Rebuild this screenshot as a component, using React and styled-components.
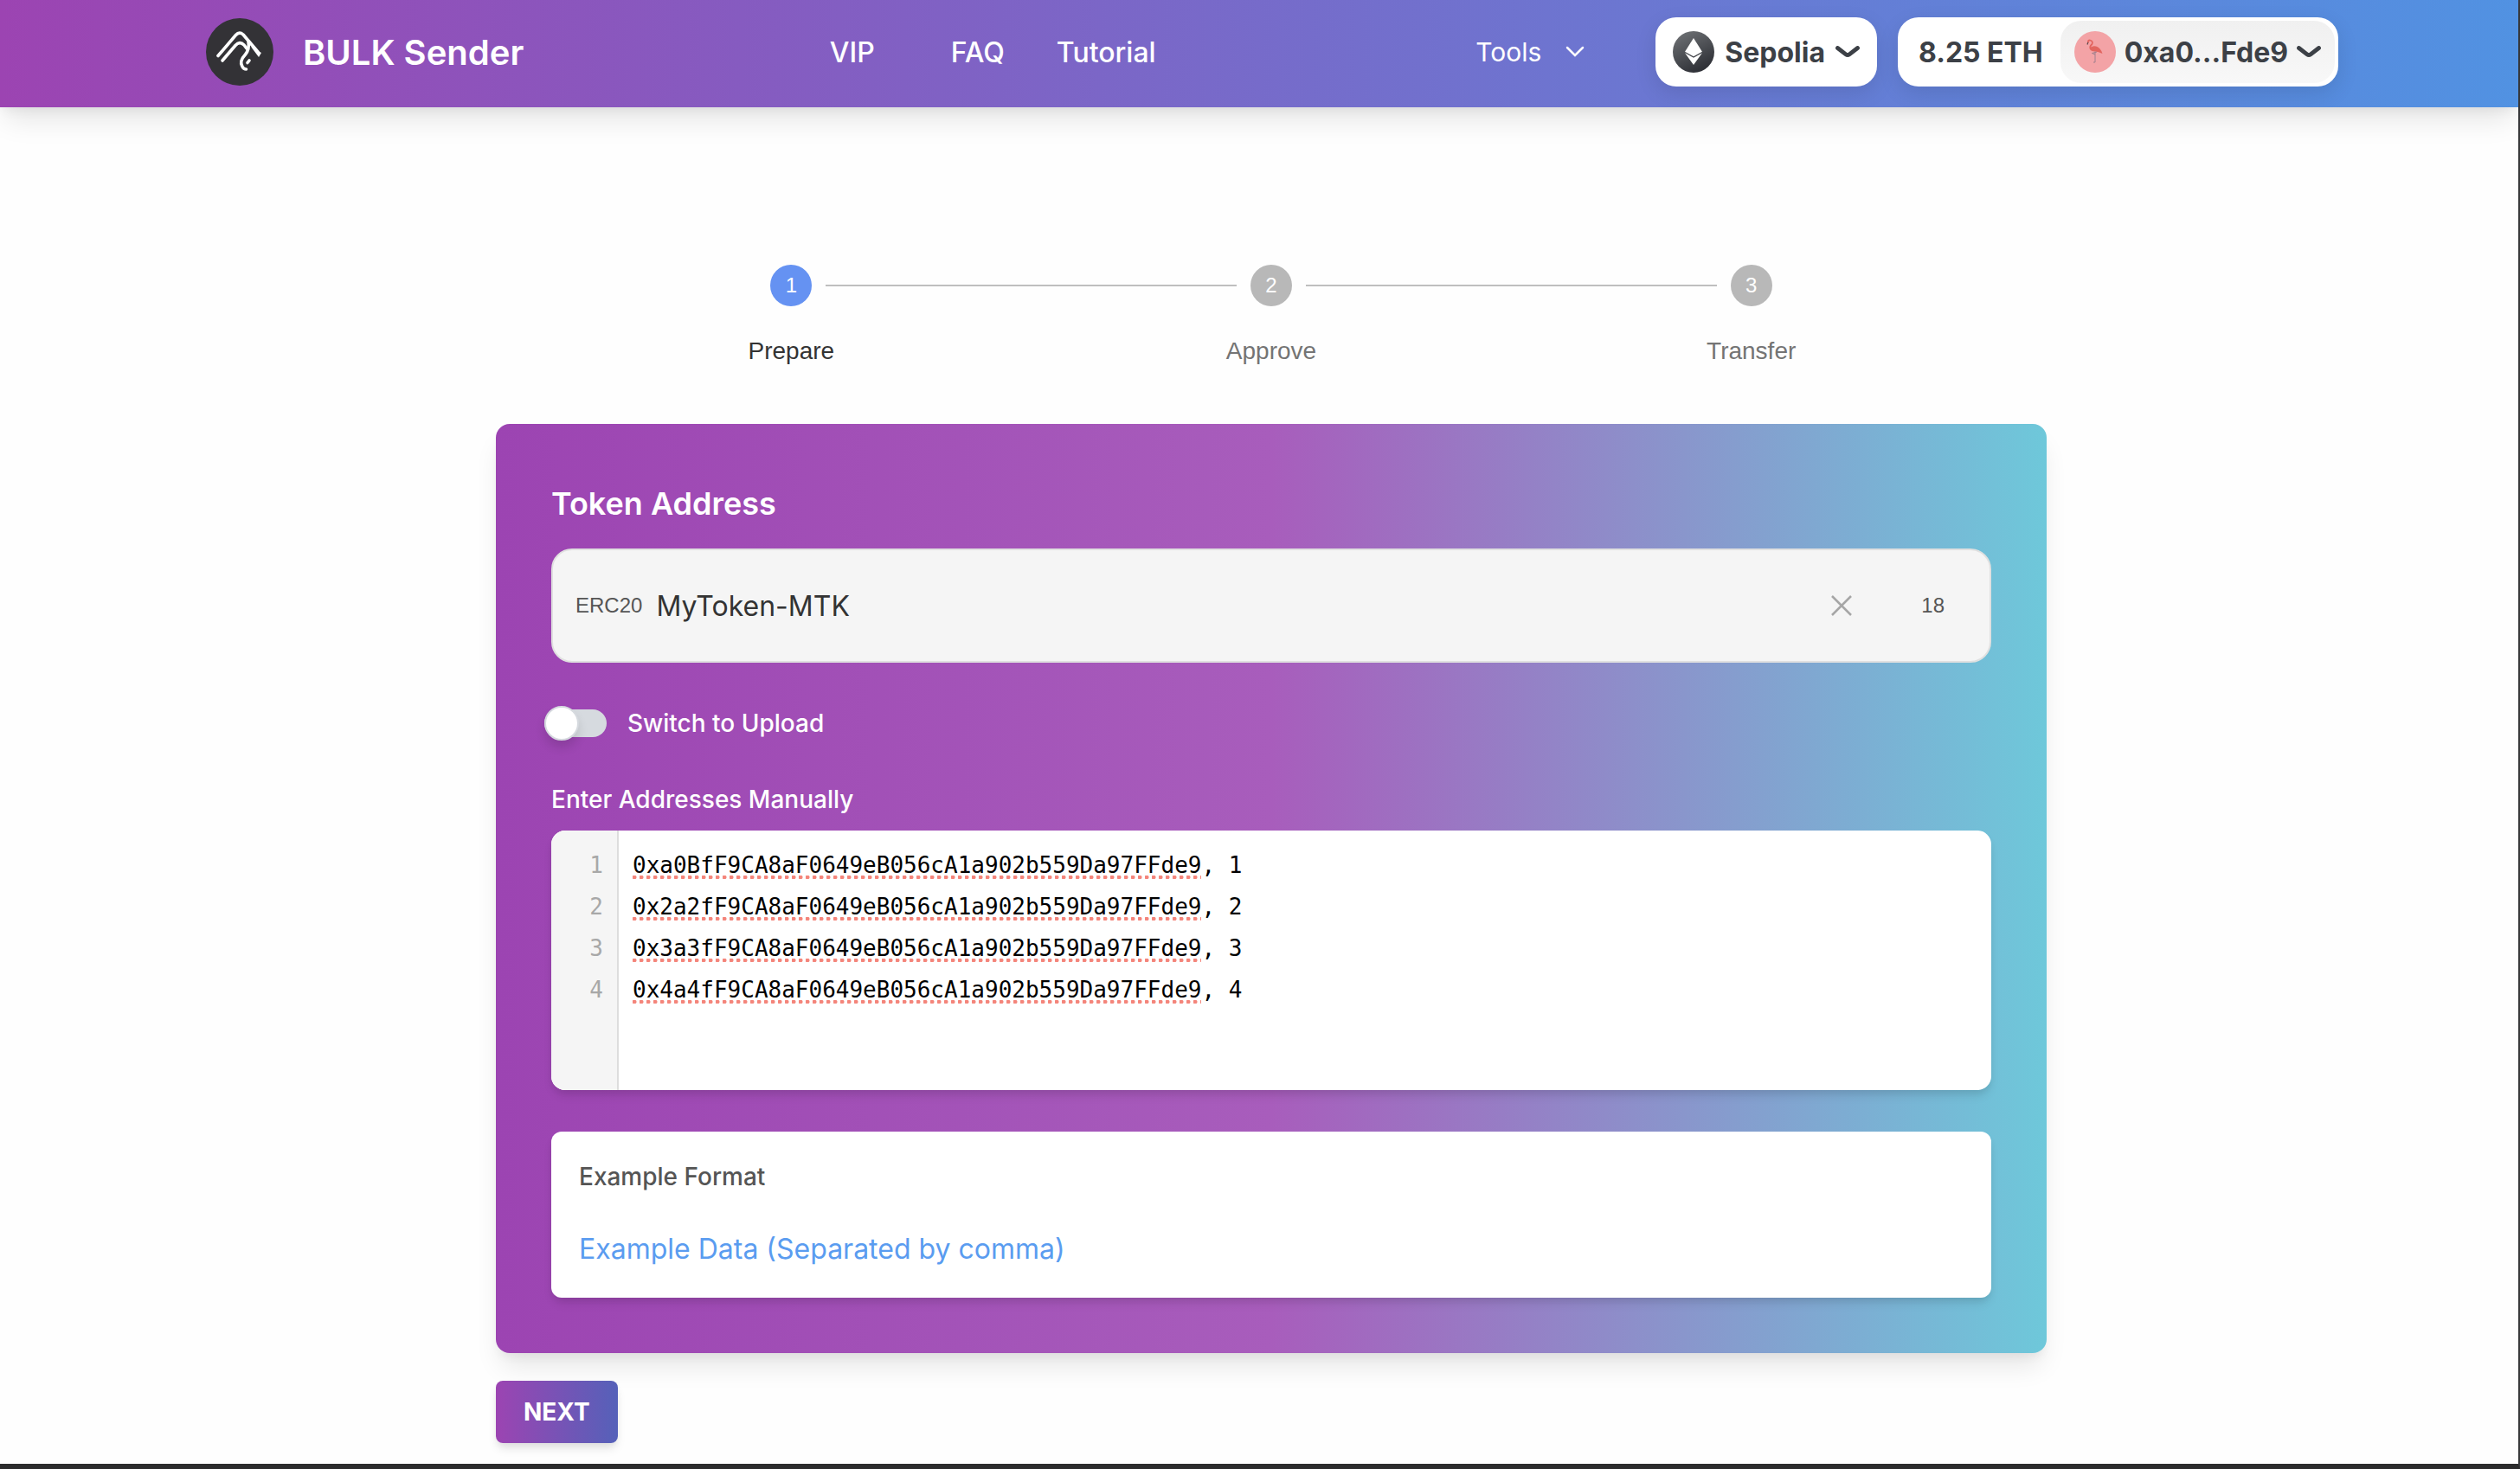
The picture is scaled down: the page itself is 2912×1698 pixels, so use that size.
import React, { useState } from 'react';
import styled, { createGlobalStyle } from 'styled-components';

const STEPS = ['Prepare', 'Approve', 'Transfer'];

const RECIPIENTS = `0xa0BfF9CA8aF0649eB056cA1a902b559Da97FFde9, 1
0x2a2fF9CA8aF0649eB056cA1a902b559Da97FFde9, 2
0x3a3fF9CA8aF0649eB056cA1a902b559Da97FFde9, 3
0x4a4fF9CA8aF0649eB056cA1a902b559Da97FFde9, 4`;

function Logo() {
  return (
    <svg width="78" height="78" viewBox="0 0 78 78" fill="none" aria-hidden="true">
      <circle cx="39" cy="39" r="39" fill="#333236" />
      <g stroke="#fff" strokeWidth="3.6" strokeLinecap="round" strokeLinejoin="round">
        <path d="M14 43.5L34.5 19.5Q38.5 15 43 19L60 39" />
        <path d="M19 49L34 31.5Q39 26 44 31L47 35" />
        <path d="M49 27Q50.5 36 45.5 42Q38 50 42 56Q43.5 59 46.5 59" />
        <path d="M48 51.5L50 49" />
      </g>
      <path d="M52 33L64 40L61 45Z" fill="#fff" />
    </svg>
  );
}

function ThinChevron() {
  return (
    <svg width="22" height="14" viewBox="0 0 22 14" fill="none" aria-hidden="true">
      <path d="M2 2L11 11L20 2" stroke="#fff" strokeWidth="2.5" strokeLinecap="round" />
    </svg>
  );
}

function BoldChevron() {
  return (
    <svg width="28" height="14" viewBox="0 0 28 14" fill="none" aria-hidden="true">
      <path
        d="M2.5 2.5L12 9.8Q14 11.4 16 9.8L25.5 2.5"
        stroke="#3c4046"
        strokeWidth="4.8"
        strokeLinecap="round"
      />
    </svg>
  );
}

function EthIcon() {
  return (
    <svg width="48" height="48" viewBox="0 0 28 28" fill="none" aria-hidden="true">
      <defs>
        <linearGradient id="ethShade" x1="0" y1="0" x2="14" y2="28" gradientUnits="userSpaceOnUse">
          <stop stopColor="#737679" />
          <stop offset="1" stopColor="#303238" />
        </linearGradient>
      </defs>
      <circle cx="14" cy="14" r="14" fill="url(#ethShade)" />
      <path d="M8.2 13.9L14 17L19.8 13.9L14 4.7Z" fill="#fff" />
      <path d="M8.2 14.8L14 18L19.8 14.8L14 22.8Z" fill="#fff" />
    </svg>
  );
}

function FlamingoAvatar() {
  return (
    <svg width="48" height="48" viewBox="0 0 48 48" fill="none" aria-hidden="true">
      <circle cx="24" cy="24" r="24" fill="#f3a3a6" />
      <path
        d="M16 13Q15.5 10.5 18 10.5Q22 11.5 20.500 15Q17 18 19 20.5"
        stroke="#e2655f"
        strokeWidth="1.8"
        strokeLinecap="round"
      />
      <path d="M15.8 13L15 15.5" stroke="#5b4a4e" strokeWidth="1.2" />
      <path d="M17.5 20Q20 16.500 25 17.5Q30 18.5 32.5 26Q28 23.5 24 23.5Q19 23.5 17.5 20Z" fill="#e2655f" />
      <path d="M24 23.5V36M26 24L20.5 25.5L24 27M24 36H22" stroke="#a07f8c" strokeWidth="1" />
    </svg>
  );
}

export default function App() {
  const [recipients, setRecipients] = useState(RECIPIENTS);
  const lines = recipients.split('\n');

  return (
    <Page>
      <GlobalStyle />
      <Header>
        <Brand href="#">
          <Logo />
          <BrandName>BULK Sender</BrandName>
        </Brand>
        <Nav>
          <NavLink href="#vip">VIP</NavLink>
          <NavLink href="#faq">FAQ</NavLink>
          <NavLink href="#tutorial">Tutorial</NavLink>
        </Nav>
        <ToolsButton type="button">
          Tools
          <ThinChevron />
        </ToolsButton>
        <Wallet>
          <ChainButton type="button">
            <EthIcon />
            Sepolia
            <BoldChevron />
          </ChainButton>
          <AccountButton type="button">
            8.25 ETH
            <Account>
              <FlamingoAvatar />
              0xa0...Fde9
              <BoldChevron />
            </Account>
          </AccountButton>
        </Wallet>
      </Header>

      <Main>
        <Content>
          <Stepper>
            {STEPS.map((label, index) => (
              <Step key={label} $active={index === 0}>
                <StepTrack>
                  <Connector $hidden={index === 0} />
                  <StepNumber $active={index === 0}>{index + 1}</StepNumber>
                  <Connector $hidden={index === STEPS.length - 1} />
                </StepTrack>
                {label}
              </Step>
            ))}
          </Stepper>

          <Card>
            <CardTitle htmlFor="token">Token Address</CardTitle>
            <TokenField>
              <TokenNote>ERC20</TokenNote>
              <TokenInput id="token" defaultValue="MyToken-MTK" />
              <ClearButton type="button" aria-label="Clear token">
                <svg width="24" height="24" viewBox="0 0 24 24" aria-hidden="true">
                  <path d="M1 1L23 23M23 1L1 23" stroke="#a6a6a6" strokeWidth="2.5" />
                </svg>
              </ClearButton>
              <TokenNote>18</TokenNote>
            </TokenField>

            <SwitchRow>
              <Switch type="checkbox" role="switch" />
              Switch to Upload
            </SwitchRow>

            <FieldLabel htmlFor="recipients">Enter Addresses Manually</FieldLabel>
            <Editor>
              <Gutter>
                {lines.map((line, index) => (
                  <span key={index}>{index + 1}</span>
                ))}
              </Gutter>
              <Misspellings aria-hidden="true">
                {lines.map((line, index) => (
                  <Underline key={index} style={{ width: `${line.split(',')[0].length}ch` }} />
                ))}
              </Misspellings>
              <EditorInput
                id="recipients"
                spellCheck={false}
                value={recipients}
                onChange={(e) => setRecipients(e.target.value)}
              />
            </Editor>

            <ExampleBox>
              <ExampleTitle>Example Format</ExampleTitle>
              <ExampleLink href="#example">Example Data (Separated by comma)</ExampleLink>
            </ExampleBox>
          </Card>
          <NextButton type="button">NEXT</NextButton>
        </Content>
      </Main>
    </Page>
  );
}

const GlobalStyle = createGlobalStyle`
  *,
  *::before {
    box-sizing: border-box;
  }

  body {
    margin: 0;
    background: #fefefe;
    font-family: Inter, sans-serif;
  }

  button,
  input,
  textarea {
    font-family: inherit;
  }
`;

const shadowLarge = '0 20px 30px -6px rgba(0, 0, 0, 0.1), 0 8px 12px -4px rgba(0, 0, 0, 0.05)';
const shadowMedium = '0 8px 12px -2px rgba(0, 0, 0, 0.1), 0 4px 8px -2px rgba(0, 0, 0, 0.06)';

const Page = styled.div`
  display: flex;
  flex-direction: column;
  min-height: 100vh;
  border-right: 2px solid #38393b;
  border-bottom: 6px solid #2b2b2c;
`;

const Header = styled.header`
  display: flex;
  align-items: center;
  padding: 20px 208px 24px 238px;
  background: linear-gradient(90deg, #9c44b2, #5192e2);
  box-shadow: ${shadowLarge};
`;

const Brand = styled.a`
  display: flex;
  align-items: center;
  gap: 34px;
  color: #fff;
  text-decoration: none;
`;

const BrandName = styled.span`
  font-size: 40px;
  font-weight: 600;
`;

const Nav = styled.nav`
  display: flex;
  gap: 60px;
  margin: 0 auto;
  padding-right: 16px;
`;

const NavLink = styled.a`
  font-size: 32px;
  font-weight: 500;
  color: #fff;
  text-decoration: none;

  &:first-child {
    margin-right: 28px;
  }
`;

const ToolsButton = styled.button`
  display: flex;
  align-items: center;
  gap: 28px;
  margin-right: 82px;
  padding: 0;
  border: 0;
  background: none;
  font-size: 30px;
  color: #fff;
`;

const Wallet = styled.div`
  display: flex;
  gap: 24px;
`;

const WalletButton = styled.button`
  display: flex;
  align-items: center;
  height: 80px;
  border: 0;
  border-radius: 24px;
  background: #fff;
  box-shadow: 0 8px 24px rgba(0, 0, 0, 0.1);
  font-size: 32px;
  font-weight: 700;
  color: #3c4046;
`;

const ChainButton = styled(WalletButton)`
  gap: 12px;
  padding: 0 20px;
`;

const AccountButton = styled(WalletButton)`
  gap: 20px;
  padding: 0 4px 0 24px;
`;

const Account = styled.span`
  display: flex;
  align-items: center;
  gap: 10px;
  height: 72px;
  padding: 0 16px;
  border-radius: 24px;
  background: linear-gradient(#f0f0f0, #f8f8f8);
`;

const Main = styled.main`
  padding: 182px 0 24px 28px;
`;

const Content = styled.div`
  max-width: 1792px;
  margin: 0 auto;
`;

const Stepper = styled.ol`
  display: flex;
  margin: 0 0 64px;
  padding: 0 64px;
  list-style: none;
`;

const Step = styled.li`
  flex: 1;
  display: flex;
  flex-direction: column;
  gap: 32px;
  font-family: 'Liberation Sans', sans-serif;
  font-size: 28px;
  line-height: 40px;
  text-align: center;
  color: ${({ $active }) => ($active ? '#333' : '#747474')};
`;

const StepTrack = styled.div`
  display: flex;
  align-items: center;
  gap: 16px;
`;

const Connector = styled.span`
  flex: 1;
  height: 2px;
  background: ${({ $hidden }) => ($hidden ? 'transparent' : '#bfbfbf')};
`;

const StepNumber = styled.span`
  width: 48px;
  height: 48px;
  border-radius: 50%;
  background: ${({ $active }) => ($active ? '#6592f2' : '#b8b8b8')};
  font-size: 24px;
  line-height: 48px;
  color: #fff;
`;

const Card = styled.section`
  display: flex;
  flex-direction: column;
  padding: 64px;
  border-radius: 16px;
  background: linear-gradient(90deg, #9c44b2 0%, #a85dbc 50%, #6ec8da 100%);
  box-shadow: ${shadowLarge};
`;

const CardTitle = styled.label`
  margin-bottom: 24px;
  font-size: 36px;
  font-weight: 600;
  line-height: 56px;
  color: #fff;
`;

const TokenField = styled.div`
  display: flex;
  align-items: center;
  height: 132px;
  padding: 0 52px 0 26px;
  border: 2px solid #e0e0e0;
  border-radius: 24px;
  background: #f5f5f5;
`;

const TokenNote = styled.span`
  font-family: 'Liberation Sans', sans-serif;
  font-size: 24px;
  color: #555;
`;

const TokenInput = styled.input`
  flex: 1;
  padding: 0 16px;
  border: 0;
  outline: 0;
  background: none;
  font-size: 32px;
  color: #333;
`;

const ClearButton = styled.button`
  display: flex;
  margin-right: 80px;
  padding: 0;
  border: 0;
  background: none;
`;

const SwitchRow = styled.label`
  display: flex;
  align-items: center;
  gap: 24px;
  margin: 50px 0 48px;
  font-size: 28px;
  font-weight: 500;
  line-height: 40px;
  color: #fff;
`;

const Switch = styled.input`
  appearance: none;
  display: flex;
  align-items: center;
  width: 72px;
  height: 32px;
  margin: 0 0 0 -8px;
  border-radius: 16px;
  background: #d6dadf;

  &::before {
    content: '';
    flex: none;
    width: 40px;
    height: 40px;
    border: 2px solid #d6dadf;
    border-radius: 50%;
    background: #fff;
    box-shadow: 0 8px 12px rgba(0, 0, 0, 0.12);
  }
`;

const FieldLabel = styled.label`
  margin-bottom: 16px;
  font-size: 28px;
  font-weight: 500;
  line-height: 40px;
  color: #fff;
`;

const Editor = styled.div`
  display: grid;
  grid-template-columns: 78px 1fr;
  min-height: 300px;
  overflow: hidden;
  border-radius: 16px;
  background: #fff;
  box-shadow: ${shadowMedium};
  font-family: 'DejaVu Sans Mono', monospace;
  font-size: 26px;
  line-height: 48px;
`;

const Gutter = styled.div`
  display: flex;
  flex-direction: column;
  padding: 16px;
  border-right: 2px solid #ddd;
  background: #f5f5f5;
  text-align: right;
  color: #a8a8a8;
`;

const Misspellings = styled.div`
  grid-area: 1 / 2;
  padding: 16px;
`;

const Underline = styled.div`
  height: 48px;
  background: radial-gradient(circle at 2px 2px, #f4857b 2px, transparent 3px) 0 36px / 8px 4px repeat-x;
`;

const EditorInput = styled.textarea`
  grid-area: 1 / 2;
  padding: 16px;
  border: 0;
  outline: 0;
  resize: none;
  background: none;
  font: inherit;
  color: #000;
`;

const ExampleBox = styled.div`
  display: flex;
  flex-direction: column;
  align-items: flex-start;
  gap: 40px;
  margin-top: 48px;
  padding: 32px;
  border-radius: 12px;
  background: #fff;
  box-shadow: ${shadowMedium};
`;

const ExampleTitle = styled.span`
  font-size: 28px;
  font-weight: 500;
  line-height: 40px;
  color: #555;
`;

const ExampleLink = styled.a`
  font-size: 32px;
  line-height: 48px;
  color: #5a9cf0;
  text-decoration: none;
`;

const NextButton = styled.button`
  height: 72px;
  margin-top: 32px;
  padding: 0 32px;
  border: 0;
  border-radius: 8px;
  background: linear-gradient(90deg, #9c44b2, #5561b9);
  box-shadow: ${shadowMedium};
  font-size: 28px;
  font-weight: 700;
  color: #fff;
`;
